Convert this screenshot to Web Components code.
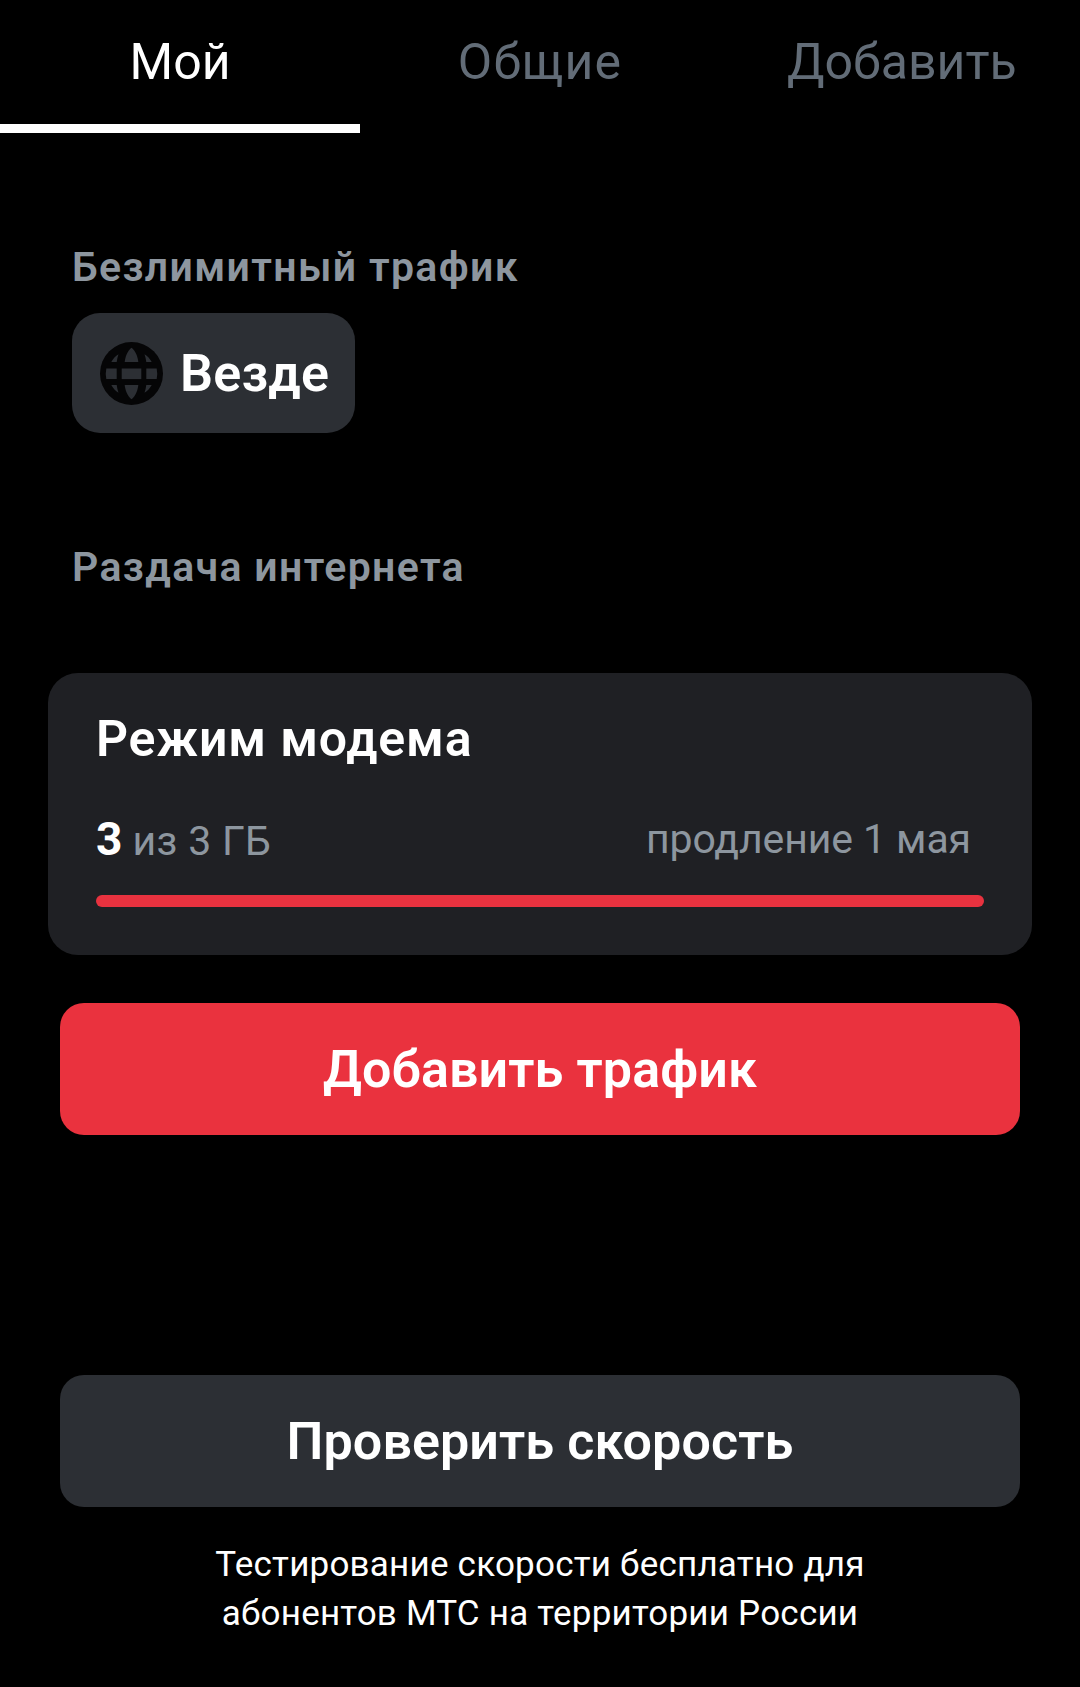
<!DOCTYPE html>
<html lang="ru"><head><meta charset="utf-8"><style>
html,body{margin:0;background:#000;}
body{width:1080px;height:1687px;overflow:hidden;font-family:Roboto,"Noto Sans",sans-serif;}
</style></head><body>
<app-screen>
<tab-bar></tab-bar>
<sec-label style="margin-top:112px">Безлимитный трафик</sec-label>
<zone-pill style="margin-top:24px">Везде</zone-pill>
<sec-label style="margin-top:112px">Раздача интернета</sec-label>
<plan-card style="margin-top:84px" title="Режим модема" used="3" rest="из 3 ГБ" note="продление 1 мая"></plan-card>
<big-button style="margin-top:48px" kind="red">Добавить трафик</big-button>
<big-button style="margin-top:240px" kind="grey">Проверить скорость</big-button>
<foot-note style="margin-top:33px">Тестирование скорости бесплатно для<br>абонентов МТС на территории России</foot-note>
</app-screen>
<script>
function def(name,css,html,init){
  customElements.define(name,class extends HTMLElement{
    constructor(){super();const s=this.attachShadow({mode:'open'});s.innerHTML='<style>'+css+'</style>'+html;}
    connectedCallback(){if(init)init(this);}
  });
}
def('app-screen',':host{display:flex;flex-direction:column;width:1080px;height:1687px;color:#fff}','<slot></slot>');
def('tab-bar',`:host{display:grid;grid-template-columns:360px 360px 360px;height:133px}
.t{font-size:50px;line-height:56px;padding-top:34px;height:99px;text-align:center;color:#626c77;white-space:nowrap;font-weight:400}
.t.on{color:#fff;border-bottom:9px solid #fff;box-sizing:border-box;height:133px}
.t.r{text-align:left;padding-left:67px}
.t.m{letter-spacing:1.2px}`,
`<div class="t on">Мой</div><div class="t m">Общие</div><div class="t r">Добавить</div>`);
def('sec-label',':host{display:block;margin-left:72px;font-size:41px;line-height:44px;font-weight:600;letter-spacing:1.35px;color:#8d969f;white-space:nowrap}','<slot></slot>');
def('zone-pill',`:host{display:flex;align-items:center;width:max-content;margin-left:72px;height:120px;padding:0 26px 0 28px;gap:17px;background:#2c2f34;border-radius:28px;font-size:52px;font-weight:600;letter-spacing:.2px;color:#fff;box-sizing:border-box}
svg{width:63px;height:63px;display:block}`,
`<svg viewBox="0 0 63 63"><circle cx="31.5" cy="31.5" r="31.5" fill="#050506"/>
<g fill="#2c2f34"><path d="M31.5 5.7C27.5 9 25.2 14.500 24.700 20h13.600C37.800 14.500 35.500 9 31.500 5.700z"/><path d="M31.500 57.300C27.500 54 25.200 48.500 24.700 43h13.600C37.800 48.500 35.500 54 31.500 57.300z"/><rect x="21.700" y="26.500" width="19.600" height="10.600"/><path d="M6.300 26.500h10.400v10.600H6.300a26 26 0 0 1 0-10.600z"/><path d="M56.700 26.500H46.300v10.600h10.400a26 26 0 0 0 0-10.600z"/><path d="M18.500 12.300C15.500 14 13 16.800 11.300 20h5.400c.3-2.600 1-5.200 1.800-7.700z"/><path d="M44.500 12.300C47.500 14 50 16.800 51.700 20h-5.400c-.3-2.600-1-5.200-1.800-7.700z"/><path d="M18.500 50.700C15.500 49 13 46.200 11.300 43h5.400c.3 2.600 1 5.200 1.800 7.700z"/><path d="M44.500 50.700C47.500 49 50 46.200 51.700 43h-5.400c-.3 2.600-1 5.200-1.800 7.700z"/></g></svg><slot></slot>`);
def('plan-card',`:host{display:block;margin:0 48px;height:282px;box-sizing:border-box;padding:38px 48px 0 48px;background:#1f2024;border-radius:30px}
.h{font-size:50px;line-height:56px;font-weight:600;letter-spacing:.85px;color:#fff;white-space:nowrap}
.r{display:flex;justify-content:space-between;align-items:baseline;margin-top:48px;padding-right:13px;font-size:41px;line-height:48px;color:#8d969f}
b{font-weight:700;color:#fff;font-size:46px}
.x{letter-spacing:.3px}
.n{letter-spacing:-.1px;transform:translateY(-2px)}
.p{height:12px;border-radius:6px;background:#e8323f;margin-top:30px}`,
`<div class="h"></div><div class="r"><span><b></b> <span class="x"></span></span><span class="n"></span></div><div class="p"></div>`,
el=>{const s=el.shadowRoot;s.querySelector('.h').textContent=el.getAttribute('title');s.querySelector('b').textContent=el.getAttribute('used');s.querySelector('.x').textContent=el.getAttribute('rest');s.querySelector('.n').textContent=el.getAttribute('note');});
def('big-button',`:host{display:flex;align-items:center;justify-content:center;margin:0 60px;height:132px;border-radius:24px;font-size:52px;font-weight:600;letter-spacing:.1px;color:#fff;background:#2c2f34}
:host([kind=red]){background:#ea323e}`,'<slot></slot>');
def('foot-note',':host{display:block;text-align:center;font-size:35px;letter-spacing:.22px;line-height:49px;color:#fff;white-space:nowrap}','<slot></slot>');
</script>
</body></html>
